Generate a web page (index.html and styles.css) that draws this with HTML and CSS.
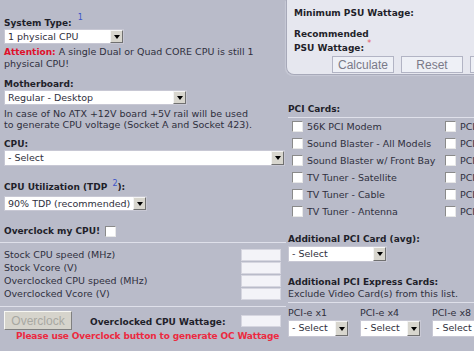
FILE: index.html
```html
<!DOCTYPE html>
<html lang="en">
<head>
    <meta charset="UTF-8">
    <title>PSU Calculator</title>
    <link rel="stylesheet" href="styles.css">
</head>
<body>
<div class="calc">

    <!-- Left column: CPU section -->
    <div class="col-left">
        <div class="lbl lbl-first">System Type: <sup class="ref">1</sup></div>
        <div class="sel w-system"><span class="sel-val">1 physical CPU</span><span class="sel-arr"></span></div>
        <p class="note"><b class="warn">Attention:</b> A single Dual or Quad CORE CPU is still 1 physical CPU!</p>

        <div class="lbl lbl-mb">Motherboard:</div>
        <div class="sel w-mb"><span class="sel-val">Regular - Desktop</span><span class="sel-arr"></span></div>
        <p class="note note-mb">In case of No ATX +12V board +5V rail will be used to generate CPU voltage (Socket A and Socket 423).</p>

        <div class="lbl lbl-cpu">CPU:</div>
        <div class="sel w-cpu"><span class="sel-val">- Select</span><span class="sel-arr"></span></div>

        <div class="lbl lbl-tdp">CPU Utilization (TDP <sup class="ref">2</sup>):</div>
        <div class="sel w-tdp"><span class="sel-val">90% TDP (recommended)</span><span class="sel-arr"></span></div>

        <div class="lbl lbl-oc">Overclock my CPU! <input type="checkbox" class="cb"></div>

        <div class="rule rule-oc"></div>

        <div class="oc-row"><span>Stock CPU speed (MHz)</span><input class="txt" type="text"></div>
        <div class="oc-row"><span>Stock Vcore (V)</span><input class="txt" type="text"></div>
        <div class="oc-row"><span>Overclocked CPU speed (MHz)</span><input class="txt" type="text"></div>
        <div class="oc-row"><span>Overclocked Vcore (V)</span><input class="txt" type="text"></div>

        <div class="rule rule-bottom"></div>

        <div class="oc-result">
            <button class="btn-oc" disabled>Overclock</button>
            <span class="lbl oc-watt">Overclocked CPU Wattage:</span>
            <input class="txt" type="text">
        </div>
        <p class="oc-warn">Please use Overclock button to generate OC Wattage</p>
    </div>

    <!-- Right column: results and cards -->
    <div class="col-right">
        <div class="result-panel">
            <div class="lbl res-min">Minimum PSU Wattage:</div>
            <div class="lbl res-rec">Recommended<br>PSU Wattage: <span class="star">*</span></div>
            <div class="res-btns">
                <button class="btn-light">Calculate</button>
                <button class="btn-light">Reset</button>
                <button class="btn-light"></button>
            </div>
        </div>

        <div class="lbl lbl-pci">PCI Cards:</div>
        <div class="rule"></div>
        <div class="pci-grid">
            <div class="pci-col">
                <label class="pci-item"><input type="checkbox" class="cb">56K PCI Modem</label>
                <label class="pci-item"><input type="checkbox" class="cb">Sound Blaster - All Models</label>
                <label class="pci-item"><input type="checkbox" class="cb">Sound Blaster w/ Front Bay</label>
                <label class="pci-item"><input type="checkbox" class="cb">TV Tuner - Satellite</label>
                <label class="pci-item"><input type="checkbox" class="cb">TV Tuner - Cable</label>
                <label class="pci-item"><input type="checkbox" class="cb">TV Tuner - Antenna</label>
            </div>
            <div class="pci-col">
                <label class="pci-item"><input type="checkbox" class="cb">PCI Firewire</label>
                <label class="pci-item"><input type="checkbox" class="cb">PCI USB 2.0</label>
                <label class="pci-item"><input type="checkbox" class="cb">PCI SATA</label>
                <label class="pci-item"><input type="checkbox" class="cb">PCI SCSI</label>
                <label class="pci-item"><input type="checkbox" class="cb">PCI Raid</label>
                <label class="pci-item"><input type="checkbox" class="cb">PCI Network</label>
            </div>
        </div>

        <div class="lbl lbl-add">Additional PCI Card (avg):</div>
        <div class="sel w-add"><span class="sel-val">- Select</span><span class="sel-arr"></span></div>

        <div class="lbl lbl-pcie">Additional PCI Express Cards:</div>
        <p class="note">Exclude Video Card(s) from this list.</p>
        <div class="rule rule-pcie"></div>
        <div class="pcie-row">
            <div class="pcie-slot">
                <div class="pcie-name">PCI-e x1</div>
                <div class="sel w-pcie"><span class="sel-val">- Select</span><span class="sel-arr"></span></div>
            </div>
            <div class="pcie-slot">
                <div class="pcie-name">PCI-e x4</div>
                <div class="sel w-pcie"><span class="sel-val">- Select</span><span class="sel-arr"></span></div>
            </div>
            <div class="pcie-slot">
                <div class="pcie-name">PCI-e x8</div>
                <div class="sel w-pcie"><span class="sel-val">- Select</span><span class="sel-arr"></span></div>
            </div>
        </div>
    </div>

</div>
</body>
</html>
```

FILE: styles.css
```css
/* Base */
html, body {
    margin: 0;
    height: 100%;
    overflow: hidden;
}

body {
    background-color: #b9bbc9;
    font-family: "DejaVu Sans", Verdana, sans-serif;
    font-size: 9.5px;
    color: #2f2f3d;
}

.calc {
    display: flex;
    width: 680px;
}

p {
    margin: 0;
}

/* Labels */
.lbl {
    font-weight: bold;
    font-size: 9px;
    line-height: 11px;
    color: #1f1f2a;
}

.ref {
    color: #3c54c8;
    font-weight: normal;
    font-size: 8px;
    vertical-align: 6px;
    line-height: 0;
    margin-left: 3px;
}

.lbl-tdp .ref {
    margin-left: 2px;
    vertical-align: 4px;
}

.note {
    line-height: 11px;
}

.warn {
    color: #e0102a;
    font-size: 9px;
}

/* Fake select boxes */
.sel {
    display: flex;
    height: 15px;
    background: #fff;
    border: 1px solid #c8c8d4;
    box-sizing: border-box;
}

.sel-val {
    flex: 1;
    line-height: 13px;
    padding-left: 3px;
    white-space: nowrap;
    overflow: hidden;
}

.sel-arr {
    width: 13px;
    background: #d8d6ce;
    border-left: 1px solid #f4f4f4;
    border-top: 1px solid #f4f4f4;
    border-right: 1px solid #707070;
    border-bottom: 1px solid #707070;
    box-sizing: border-box;
    display: flex;
    align-items: center;
    justify-content: center;
}

.sel-arr::after {
    content: "";
    border-left: 3px solid transparent;
    border-right: 3px solid transparent;
    border-top: 4px solid #000;
}

.w-system { width: 120px; }
.w-mb { width: 183px; }
.w-cpu { width: 281px; height: 16px; }
.w-tdp { width: 143px; }
.w-add { width: 99px; height: 16px; }
.w-pcie { width: 61px; height: 17px; }

/* Left column */
.col-left {
    width: 286px;
    flex-shrink: 0;
    padding-left: 4px;
    box-sizing: border-box;
}

.lbl-first { margin-top: 18px; }
.col-left .note { margin-top: 2px; }
.lbl-mb { margin-top: 10px; }
.col-left .note-mb { margin-top: 3px; width: 252px; }
.lbl-cpu { margin-top: 9px; }
.lbl-tdp { margin-top: 16px; margin-bottom: 3px; }
.lbl-oc {
    margin-top: 15px;
    display: flex;
    align-items: center;
    gap: 5px;
}

.cb {
    appearance: none;
    width: 11px;
    height: 11px;
    margin: 0;
    background: #fff;
    border-top: 1px solid #8a8a8a;
    border-left: 1px solid #8a8a8a;
    border-right: 1px solid #e8e8e8;
    border-bottom: 1px solid #e8e8e8;
    box-sizing: border-box;
    flex-shrink: 0;
}

.rule {
    height: 1px;
    background: #dfe0ea;
}

.col-left .rule {
    margin-left: -4px;
}

.rule-oc { margin-top: 5px; margin-bottom: 5px; }

.oc-row {
    display: flex;
    justify-content: space-between;
    align-items: center;
    height: 13px;
    width: 277px;
}

.txt {
    width: 40px;
    height: 12px;
    margin: 0;
    padding: 0;
    background: #f3f3f8;
    border: 1px solid #d6d6e0;
    box-sizing: border-box;
}

.rule-bottom { margin-top: 6px; margin-bottom: 4px; }

.oc-result {
    display: flex;
    align-items: center;
    width: 277px;
}

.btn-oc {
    width: 68px;
    height: 19px;
    padding: 0;
    background: #d6d4cc;
    border-top: 1px solid #f8f8f4;
    border-left: 1px solid #f8f8f4;
    border-right: 1px solid #808080;
    border-bottom: 1px solid #808080;
    font-family: "Liberation Sans", Arial, sans-serif;
    font-size: 12px;
    color: #a8a8a2;
}

.oc-watt {
    margin-left: 18px;
    flex: 1;
    margin-top: 3px;
}

.oc-warn {
    margin-top: 1px;
    padding-left: 12px;
    font-weight: bold;
    font-size: 9px;
    letter-spacing: -0.15px;
    line-height: 11px;
    white-space: nowrap;
    color: #ec2a40;
}

/* Right column */
.col-right {
    flex: 1;
    padding-left: 2px;
}

.result-panel {
    height: 75px;
    margin-left: -2px;
    padding: 8px 0 0 8px;
    box-sizing: border-box;
    background: #e6e7ef;
    border-left: 1px solid #a7a9b9;
    border-bottom: 1px solid #a7a9b9;
    border-bottom-left-radius: 8px;
    box-shadow: -1px 1px 1px #c8cad6;
}

.res-min { margin-left: -1px; }

.res-rec {
    margin-top: 8px;
    margin-left: -1px;
    line-height: 14px;
}

.star {
    color: #e4586a;
    font-weight: normal;
    font-size: 8px;
    vertical-align: 5px;
    line-height: 0;
}

.res-btns {
    display: flex;
    gap: 7px;
    margin-top: 1px;
    margin-left: 37px;
}

.btn-light {
    width: 62px;
    height: 17px;
    padding: 0;
    background: #eef0f6;
    border: 1px solid #b2b4c4;
    font-family: "Liberation Sans", Arial, sans-serif;
    font-size: 12px;
    color: #7a7a88;
}

.lbl-pci { margin-top: 29px; margin-bottom: 2px; }

.pci-grid {
    display: flex;
    gap: 13px;
    margin-top: 0;
    padding-left: 4px;
}

.pci-col {
    display: flex;
    flex-direction: column;
    width: 140px;
}

.pci-item {
    display: flex;
    align-items: center;
    gap: 4px;
    height: 17px;
    white-space: nowrap;
}

.lbl-add { margin-top: 14px; margin-bottom: 1px; }

.lbl-pcie { margin-top: 15px; }

.rule-pcie { margin-top: 3px; margin-bottom: 4px; }

.pcie-row {
    display: flex;
    gap: 11px;
}

.pcie-name {
    line-height: 11px;
    margin-bottom: 2px;
}
```
